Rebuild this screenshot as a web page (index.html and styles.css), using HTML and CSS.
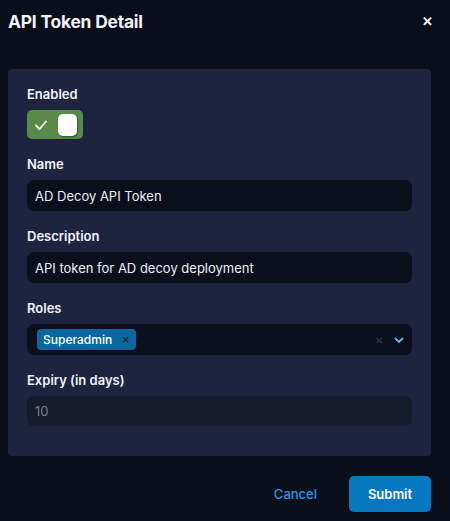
FILE: index.html
```html
<!DOCTYPE html>
<html lang="en">
<head>
<meta charset="UTF-8">
<meta name="viewport" content="width=device-width, initial-scale=1.0">
<title>API Token Detail</title>
<link rel="stylesheet" href="styles.css">
</head>
<body>
  <div class="header">
    <h1>API Token Detail</h1>
    <span class="close">&#x2715;</span>
  </div>
  <div class="card">
    <div class="field">
      <label>Enabled</label>
      <div class="toggle">
        <svg class="check" width="14" height="14" viewBox="0 0 14 14"><path d="M2 7.5 L5.5 11 L12 3.5" fill="none" stroke="#fff" stroke-width="1.8" stroke-linecap="round" stroke-linejoin="round"/></svg>
        <span class="knob"></span>
      </div>
    </div>
    <div class="field">
      <label>Name</label>
      <div class="input">AD Decoy API Token</div>
    </div>
    <div class="field">
      <label>Description</label>
      <div class="input">API token for AD decoy deployment</div>
    </div>
    <div class="field">
      <label>Roles</label>
      <div class="input select">
        <span class="chip">Superadmin <span class="chip-x">&#x2715;</span></span>
        <span class="select-icons">
          <span class="clear">&#x2715;</span>
          <svg width="12" height="12" viewBox="0 0 12 12"><path d="M2.5 4.5 L6 8 L9.5 4.5" fill="none" stroke="#5bb8ee" stroke-width="1.8" stroke-linecap="round" stroke-linejoin="round"/></svg>
        </span>
      </div>
    </div>
    <div class="field">
      <label>Expiry (in days)</label>
      <div class="input disabled">10</div>
    </div>
  </div>
  <div class="actions">
    <button class="cancel">Cancel</button>
    <button class="submit">Submit</button>
  </div>
</body>
</html>
```

FILE: styles.css
```css
body {
  font-family: Inter, "Noto Sans", sans-serif;
  margin: 0;
  padding: 0 19px 0 8px;
  background-color: #0a0e1a;
  color: #f1f3f8;
}

/* Header */
.header {
  display: flex;
  justify-content: space-between;
  align-items: center;
  height: 42px;
}

h1 {
  font-size: 17.4px;
  font-weight: 700;
  margin: 0;
  letter-spacing: -0.2px;
}

.close {
  font-size: 13px;
  font-weight: 700;
  color: #fff;
  margin-right: -2px;
}

/* Card */
.card {
  background-color: #1e2440;
  border-radius: 4px;
  margin-top: 27px;
  padding: 16px 19px 30px 19px;
}

.field {
  margin-bottom: 16px;
}

.field:last-child {
  margin-bottom: 0;
}

label {
  display: block;
  font-size: 13px;
  font-weight: 600;
  margin-bottom: 7px;
  line-height: 18px;
}

/* Toggle */
.toggle {
  width: 56px;
  height: 29px;
  background-color: #5a8a4a;
  border-radius: 5px;
  display: flex;
  align-items: center;
  box-sizing: border-box;
  padding: 0 6px 0 7px;
  justify-content: space-between;
}

.knob {
  width: 19px;
  height: 22px;
  background-color: #fff;
  border-radius: 5px;
  box-shadow: 1px 1px 2px rgba(0, 60, 40, 0.6);
}

/* Inputs */
.input {
  background-color: #0b0f1c;
  border-radius: 7px;
  height: 31px;
  display: flex;
  align-items: center;
  padding: 0 8px;
  font-size: 13px;
  color: #eef0f5;
}

.input.disabled {
  background-color: #151a2d;
  color: #7c8190;
  height: 30px;
}

.select {
  padding: 0 7px 0 10px;
  justify-content: space-between;
}

.chip {
  background-color: #0b67a0;
  border-radius: 4px;
  height: 21px;
  display: flex;
  align-items: center;
  padding: 0 6px 0 6px;
  font-size: 12px;
  font-weight: 500;
  color: #fff;
}

.chip-x {
  font-size: 9px;
  font-weight: 700;
  color: #1c2a3a;
  margin-left: 10px;
}

.select-icons {
  display: flex;
  align-items: center;
  gap: 10px;
}

.clear {
  font-size: 10px;
  font-weight: 700;
  color: #2a2f3c;
}

/* Buttons */
.actions {
  display: flex;
  justify-content: flex-end;
  align-items: center;
  margin-top: 20px;
  gap: 22px;
}

.cancel,
.submit {
  font-family: Inter, "Noto Sans", sans-serif;
  font-size: 13px;
  font-weight: 500;
  border: none;
  cursor: pointer;
}

.cancel {
  background: none;
  color: #1f9be8;
  padding: 0 10px;
}

.submit {
  background-color: #0877c2;
  color: #fff;
  width: 82px;
  height: 36px;
  border-radius: 5px;
  font-weight: 600;
}
```
